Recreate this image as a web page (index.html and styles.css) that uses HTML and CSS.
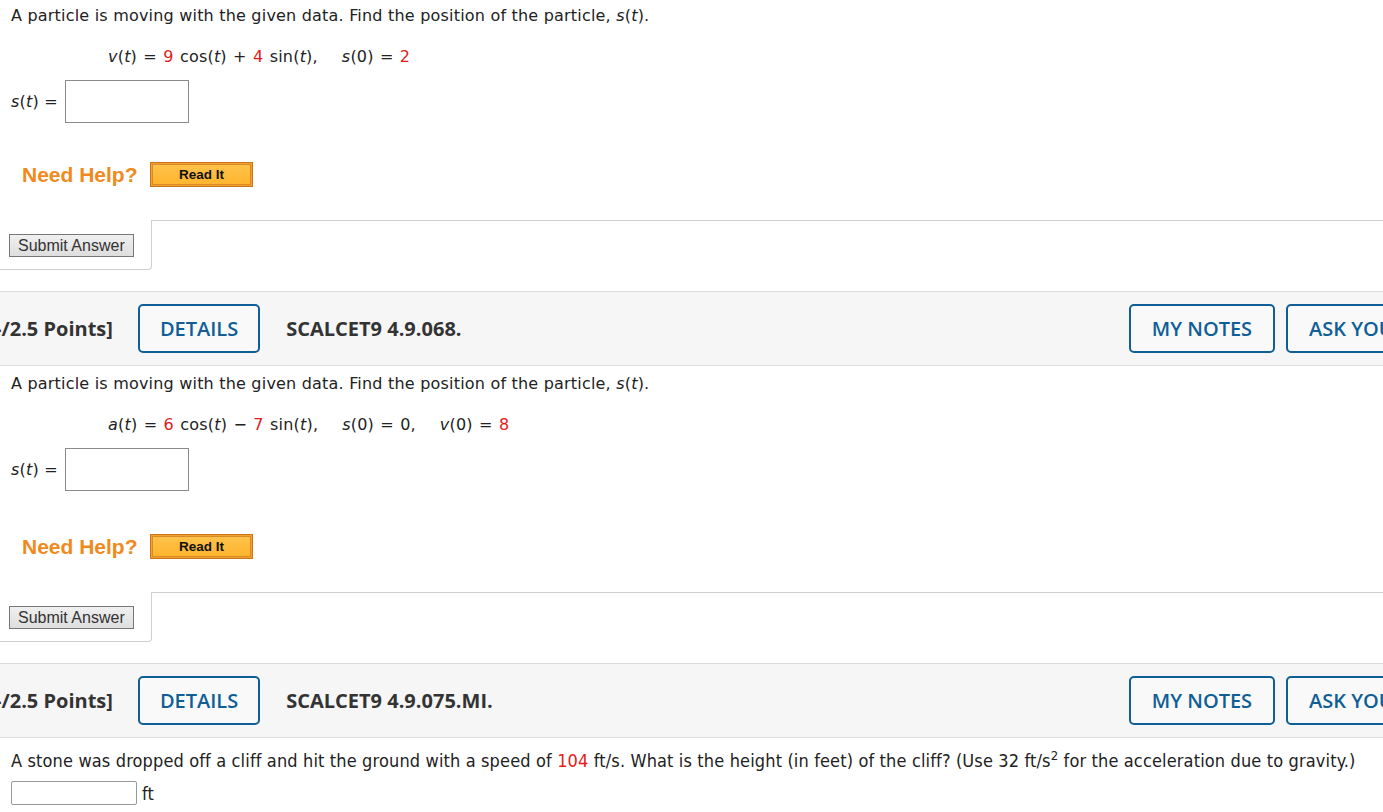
FILE: index.html
```html
<!DOCTYPE html>
<html>
<head>
<meta charset="utf-8">
<link rel="stylesheet" href="styles.css">
</head>
<body>
<div class="page">

  <section class="q q-first">
    <p class="prompt">A particle is moving with the given data. Find the position of the particle, <i>s</i>(<i>t</i>).</p>
    <div class="eq"><i>v</i>(<i>t</i>) = <span class="red">9</span> cos(<i>t</i>) + <span class="red">4</span> sin(<i>t</i>),<span class="sep"></span><i>s</i>(0) = <span class="red">2</span></div>
    <div class="ans"><span class="lbl"><i>s</i>(<i>t</i>) = </span><span class="box"></span></div>
    <div class="help"><span class="need">Need Help?</span><span class="readit"><span class="readit-in">Read It</span></span></div>
    <div class="submit-row"><div class="submit-cell"><span class="submit">Submit Answer</span></div><div class="submit-rest"></div></div>
  </section>

  <header class="qhead">
    <span class="pts">-/2.5 Points]</span>
    <span class="obtn">DETAILS</span>
    <span class="code">SCALCET9 4.9.068.</span>
    <span class="right"><span class="obtn">MY NOTES</span><span class="obtn">ASK YOUR TEACHER</span></span>
  </header>

  <section class="q q-second">
    <p class="prompt">A particle is moving with the given data. Find the position of the particle, <i>s</i>(<i>t</i>).</p>
    <div class="eq"><i>a</i>(<i>t</i>) = <span class="red">6</span> cos(<i>t</i>) − <span class="red">7</span> sin(<i>t</i>),<span class="sep"></span><i>s</i>(0) = 0,<span class="sep"></span><i>v</i>(0) = <span class="red">8</span></div>
    <div class="ans"><span class="lbl"><i>s</i>(<i>t</i>) = </span><span class="box"></span></div>
    <div class="help help-low"><span class="need">Need Help?</span><span class="readit"><span class="readit-in">Read It</span></span></div>
    <div class="submit-row"><div class="submit-cell"><span class="submit">Submit Answer</span></div><div class="submit-rest"></div></div>
  </section>

  <header class="qhead">
    <span class="pts">-/2.5 Points]</span>
    <span class="obtn">DETAILS</span>
    <span class="code">SCALCET9 4.9.075.MI.</span>
    <span class="right"><span class="obtn">MY NOTES</span><span class="obtn">ASK YOUR TEACHER</span></span>
  </header>

  <section class="q q-third">
    <p class="prompt2">A stone was dropped off a cliff and hit the ground with a speed of <span class="red">104</span> ft/s. What is the height (in feet) of the cliff? (Use 32 ft/s<sup>2</sup> for the acceleration due to gravity.)</p>
    <div class="ans2"><span class="box2"></span><span class="unit">ft</span></div>
  </section>

</div>
</body>
</html>
```

FILE: styles.css
```css
html, body {
  margin: 0;
  padding: 0;
  background: #fff;
  overflow: hidden;
}
.page {
  width: 1522px;
  font-family: "DejaVu Sans", Verdana, sans-serif;
  font-size: 16px;
  letter-spacing: 0.2px;
  color: #222;
}
.q {
  padding-left: 11px;
}
.q-second {
  padding-top: 2px;
}
.prompt {
  margin: 0;
  line-height: 32px;
}
.eq {
  margin-top: 10px;
  line-height: 30px;
  padding-left: 97px;
  word-spacing: 1px;
}
.sep {
  display: inline-block;
  width: 24px;
}
.red {
  color: #e21b1b;
}
.ans {
  margin-top: 8px;
  display: flex;
  align-items: center;
  height: 43px;
}
.lbl {
  width: 54px;
  white-space: pre;
}
.box {
  width: 122px;
  height: 41px;
  border: 1px solid #8a8a8a;
  background: #fff;
}
.help {
  margin-top: 39px;
  display: flex;
  align-items: center;
  height: 25px;
  padding-left: 11px;
  letter-spacing: 0;
}
.help-low {
  margin-top: 43px;
}
.need {
  font-family: "Liberation Sans", Arial, sans-serif;
  font-weight: bold;
  font-size: 21px;
  color: #f08a1c;
  width: 128px;
}
.readit {
  display: block;
  border: 1px solid #c9761a;
  background: #f5a02c;
  padding: 1px;
  box-sizing: border-box;
  width: 103px;
  height: 25px;
}
.readit-in {
  display: flex;
  align-items: center;
  justify-content: center;
  height: 100%;
  border: 1px solid #d98a28;
  background: linear-gradient(#ffc24a, #ffb52e);
  box-sizing: border-box;
  font-family: "Liberation Sans", Arial, sans-serif;
  font-weight: bold;
  font-size: 13.5px;
  color: #111;
}
.submit-row {
  margin-top: 33px;
  margin-left: -11px;
  display: flex;
  height: 50px;
  letter-spacing: 0;
}
.submit-cell {
  border-right: 1px solid #cfcfcf;
  border-bottom: 1px solid #cfcfcf;
  border-bottom-right-radius: 4px;
  display: flex;
  align-items: center;
  padding-left: 9px;
  box-sizing: border-box;
  width: 152px;
}
.submit {
  display: block;
  font-family: "Liberation Sans", Arial, sans-serif;
  font-size: 16px;
  color: #333;
  border: 1px solid #777;
  background: linear-gradient(#f0f0f0, #dedede);
  padding: 2px 8px 1px 8px;
  line-height: 18px;
  margin-top: 2px;
}
.submit-rest {
  flex: 1;
  border-top: 1px solid #cfcfcf;
}
.qhead {
  margin-top: 21px;
  height: 73px;
  border-top: 1px solid #dcdcdc;
  border-bottom: 1px solid #dcdcdc;
  background: #f6f6f6;
  display: flex;
  align-items: center;
  font-family: "Open Sans", sans-serif;
  font-size: 20px;
  letter-spacing: 0;
}
.pts {
  font-weight: 700;
  color: #333;
  margin-left: -5px;
  margin-right: 25px;
}
.obtn {
  display: flex;
  align-items: center;
  justify-content: center;
  height: 49px;
  box-sizing: border-box;
  border: 2px solid #0f5f96;
  border-radius: 5px;
  color: #0f5f96;
  font-weight: 600;
  padding: 0 20px;
  background: #f9f9f9;
}
.code {
  font-weight: 700;
  color: #333;
  margin-left: 26px;
}
.right {
  margin-left: auto;
  display: flex;
  gap: 11px;
}
.right .obtn {
  padding: 0 21px;
}
.q-third {
  padding-top: 9px;
}
.prompt2 {
  margin: 0;
  font-family: "DejaVu Sans Condensed", "DejaVu Sans", sans-serif;
  font-stretch: condensed;
  font-size: 18px;
  letter-spacing: 0.14px;
  line-height: 28px;
}
.prompt2 sup {
  font-size: 13px;
  line-height: 0;
}
.ans2 {
  margin-top: 6px;
  display: flex;
  align-items: center;
}
.box2 {
  width: 124px;
  height: 22px;
  border: 1px solid #999;
  border-radius: 2px;
  background: #fff;
}
.unit {
  font-family: "DejaVu Sans Condensed", "DejaVu Sans", sans-serif;
  font-stretch: condensed;
  font-size: 18px;
  margin-left: 5px;
}
```
